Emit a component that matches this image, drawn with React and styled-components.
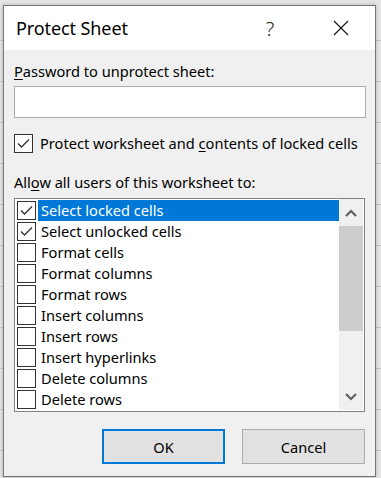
import React from 'react';
import styled, { createGlobalStyle } from 'styled-components';

const Global = createGlobalStyle`
  html, body {
    margin: 0;
    padding: 0;
  }
  body {
    width: 381px;
    height: 478px;
    overflow: hidden;
    background-color: #e6e6e6;
    background-image: repeating-linear-gradient(to bottom, transparent 0 40px, #c6c6c6 40px 41px);
    font-family: "Segoe UI", "Noto Sans", sans-serif;
  }
`;

const Backdrop = styled.div`
  padding: 5px 5px 1px 3px;
  height: 478px;
  box-sizing: border-box;
`;

const Dialog = styled.div`
  width: 373px;
  height: 472px;
  box-sizing: border-box;
  border: 1px solid #767676;
  background: #f0f0f0;
  display: flex;
  flex-direction: column;
  box-shadow: 0 0 4px rgba(0, 0, 0, 0.25);
`;

const TitleBar = styled.div`
  height: 44px;
  background: #fff;
  display: flex;
  align-items: center;
  padding-left: 12px;
  color: #000;
`;

const Title = styled.div`
  flex: 1;
  font-size: 18px;
  letter-spacing: -0.1px;
`;

const HelpButton = styled.div`
  width: 20px;
  margin-right: 53px;
  text-align: center;
  font-size: 20px;
  font-weight: 300;
  color: #222;
`;

const CloseButton = styled.div`
  width: 16px;
  height: 16px;
  margin-right: 26px;
  display: flex;
`;

const Body = styled.div`
  flex: 1;
  padding: 10px 9px 0 10px;
  display: flex;
  flex-direction: column;
  font-size: 14.6px;
  color: #000;
`;

const Label = styled.div`
  line-height: 22px;
  u {
    text-decoration: underline;
    text-underline-offset: 2px;
  }
`;

const Input = styled.div`
  margin-top: 4px;
  height: 32px;
  box-sizing: border-box;
  border: 1px solid #ababab;
  background: #fff;
`;

const CheckRow = styled.div`
  margin-top: 15px;
  display: flex;
  align-items: center;
  gap: 7px;
  u {
    text-decoration: underline;
    text-underline-offset: 2px;
  }
`;

const Box = styled.div`
  width: 19px;
  height: 19px;
  box-sizing: border-box;
  border: 1px solid #333;
  background: #fff;
  display: flex;
  align-items: center;
  justify-content: center;
  flex-shrink: 0;
`;

const SectionLabel = styled(Label)`
  margin-top: 18px;
`;

const List = styled.div`
  margin-top: 5px;
  height: 214px;
  width: 351px;
  box-sizing: border-box;
  border: 1px solid #828282;
  background: #fff;
  display: flex;
`;

const Rows = styled.div`
  flex: 1;
  padding-top: 1px;
  overflow: hidden;
`;

const Row = styled.div`
  height: 21px;
  display: flex;
  align-items: center;
  padding-left: 2px;
  gap: 2px;
`;

const RowText = styled.div`
  flex: 1;
  height: 21px;
  line-height: 21px;
  padding-left: 3px;
  background: ${p => (p.$selected ? '#0078d7' : 'transparent')};
  color: ${p => (p.$selected ? '#fff' : '#000')};
`;

const Scrollbar = styled.div`
  width: 24px;
  background: #f0f0f0;
  display: flex;
  flex-direction: column;
  margin: 0 1px 1px 0;
`;

const Arrow = styled.div`
  height: 27px;
  display: flex;
  align-items: center;
  justify-content: center;
`;

const Thumb = styled.div`
  height: 105px;
  background: #cdcdcd;
`;

const Track = styled.div`
  flex: 1;
`;

const Buttons = styled.div`
  margin-top: 17px;
  display: flex;
  justify-content: flex-end;
  gap: 17px;
  padding-right: 1px;
`;

const Button = styled.div`
  width: 123px;
  height: 35px;
  box-sizing: border-box;
  background: #e1e1e1;
  border: ${p => (p.$default ? '2px solid #0078d7' : '1px solid #adadad')};
  display: flex;
  align-items: center;
  justify-content: center;
  font-size: 14.6px;
`;

const Check = () => (
  <svg width="15" height="15" viewBox="0 0 15 15">
    <polyline points="2,7.5 5.5,11 13,3.5" fill="none" stroke="#333" strokeWidth="1.3" />
  </svg>
);

const Chevron = ({ up }) => (
  <svg width="12" height="8" viewBox="0 0 12 8">
    <polyline
      points={up ? '1,7 6,2 11,7' : '1,1 6,6 11,1'}
      fill="none"
      stroke="#606060"
      strokeWidth="2.2"
    />
  </svg>
);

const items = [
  ['Select locked cells', true],
  ['Select unlocked cells', true],
  ['Format cells', false],
  ['Format columns', false],
  ['Format rows', false],
  ['Insert columns', false],
  ['Insert rows', false],
  ['Insert hyperlinks', false],
  ['Delete columns', false],
  ['Delete rows', false],
];

export default function App() {
  return (
    <Backdrop>
      <Global />
      <Dialog>
        <TitleBar>
          <Title>Protect Sheet</Title>
          <HelpButton>?</HelpButton>
          <CloseButton>
            <svg width="16" height="16" viewBox="0 0 16 16">
              <path d="M1 1 L15 15 M15 1 L1 15" stroke="#111" strokeWidth="1.1" />
            </svg>
          </CloseButton>
        </TitleBar>
        <Body>
          <Label><u>P</u>assword to unprotect sheet:</Label>
          <Input />
          <CheckRow>
            <Box><Check /></Box>
            <span>Protect worksheet and <u>c</u>ontents of locked cells</span>
          </CheckRow>
          <SectionLabel>All<u>o</u>w all users of this worksheet to:</SectionLabel>
          <List>
            <Rows>
              {items.map(([label, checked], i) => (
                <Row key={label}>
                  <Box>{checked && <Check />}</Box>
                  <RowText $selected={i === 0}>{label}</RowText>
                </Row>
              ))}
            </Rows>
            <Scrollbar>
              <Arrow><Chevron up /></Arrow>
              <Thumb />
              <Track />
              <Arrow><Chevron /></Arrow>
            </Scrollbar>
          </List>
          <Buttons>
            <Button $default>OK</Button>
            <Button>Cancel</Button>
          </Buttons>
        </Body>
      </Dialog>
    </Backdrop>
  );
}
